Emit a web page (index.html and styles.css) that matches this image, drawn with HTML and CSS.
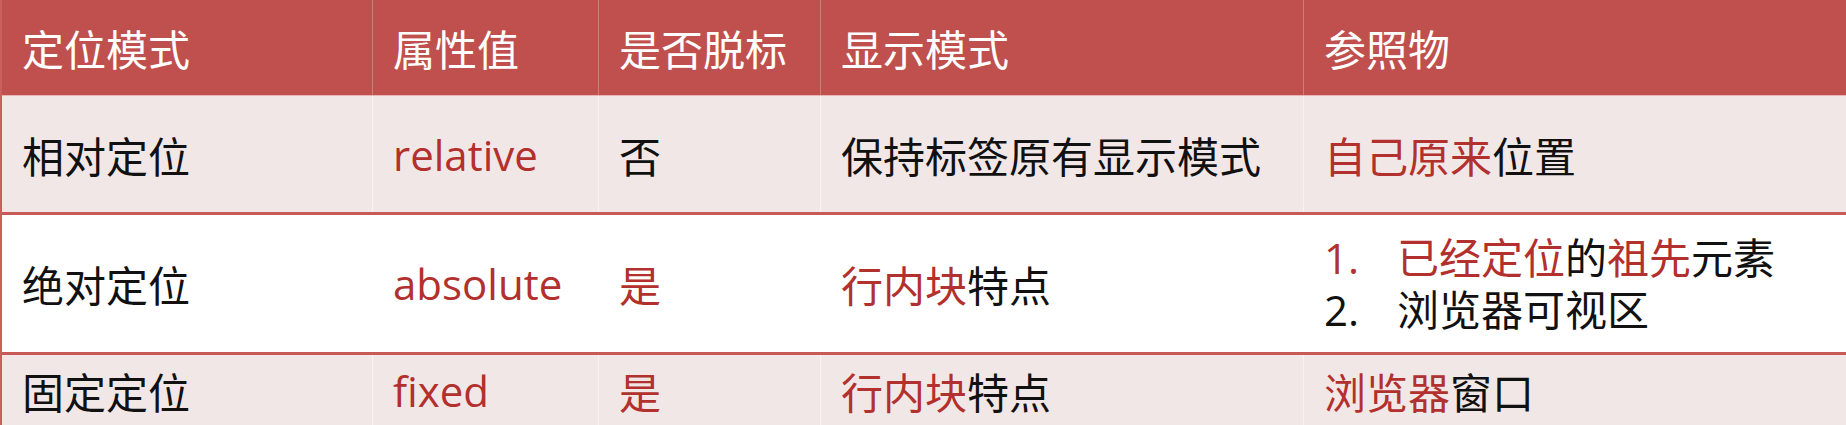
FILE: index.html
```html
<!DOCTYPE html>
<html lang="zh-CN">
<head>
<meta charset="utf-8">
<title>定位模式</title>
<link rel="stylesheet" href="styles.css">
</head>
<body>
<div class="table">
  <div class="row head">
    <div class="cell">定位模式</div>
    <div class="cell">属性值</div>
    <div class="cell">是否脱标</div>
    <div class="cell">显示模式</div>
    <div class="cell">参照物</div>
  </div>
  <div class="row r1 pink">
    <div class="cell">相对定位</div>
    <div class="cell"><span class="hl">relative</span></div>
    <div class="cell">否</div>
    <div class="cell">保持标签原有显示模式</div>
    <div class="cell"><span><span class="hl">自己原来</span>位置</span></div>
  </div>
  <div class="row r2">
    <div class="cell">绝对定位</div>
    <div class="cell"><span class="hl">absolute</span></div>
    <div class="cell"><span class="hl">是</span></div>
    <div class="cell"><span><span class="hl">行内块</span>特点</span></div>
    <div class="cell">
      <ol class="list">
        <li class="item"><span class="num hl">1.</span><span><span class="hl">已经定位</span>的<span class="hl">祖先</span>元素</span></li>
        <li class="item"><span class="num">2.</span><span>浏览器可视区</span></li>
      </ol>
    </div>
  </div>
  <div class="row r3 pink">
    <div class="cell">固定定位</div>
    <div class="cell"><span class="hl">fixed</span></div>
    <div class="cell"><span class="hl">是</span></div>
    <div class="cell"><span><span class="hl">行内块</span>特点</span></div>
    <div class="cell"><span><span class="hl">浏览器</span>窗口</span></div>
  </div>
</div>
</body>
</html>
```

FILE: styles.css
```css
* { box-sizing: border-box; }

html, body {
  margin: 0;
  padding: 0;
  background: #ffffff;
}

body {
  font-family: "Open Sans", "Noto Sans CJK SC", sans-serif;
  font-size: 42px;
  color: #111111;
  overflow: hidden;
}

.table {
  width: 1846px;
  border-left: 2px solid #cb5f5c;
}

.row {
  display: grid;
  grid-template-columns: 370px 226px 222px 483px 1fr;
}

.cell {
  display: flex;
  align-items: center;
  padding: 0 20px;
  border-left: 1px solid rgba(255, 255, 255, 0.45);
  white-space: nowrap;
}

.cell:first-child {
  border-left: none;
}

.head {
  height: 96px;
  background: #c0504d;
  color: #ffffff;
  border-bottom: 1px solid #e9b6b5;
}

.head .cell {
  border-left-color: rgba(255, 255, 255, 0.25);
}

.pink {
  background: #f2e7e7;
}

.r1 {
  height: 116px;
}

.r2 {
  height: 140px;
  background: #ffffff;
  border-top: 3px solid #c95956;
}

.r3 {
  height: 74px;
  border-top: 3px solid #c95956;
}

.hl {
  color: #b2302d;
}

.list {
  list-style: none;
  margin: 0;
  padding: 0;
  line-height: 52px;
}

.item {
  display: flex;
}

.num {
  width: 73px;
  flex: none;
}
```
